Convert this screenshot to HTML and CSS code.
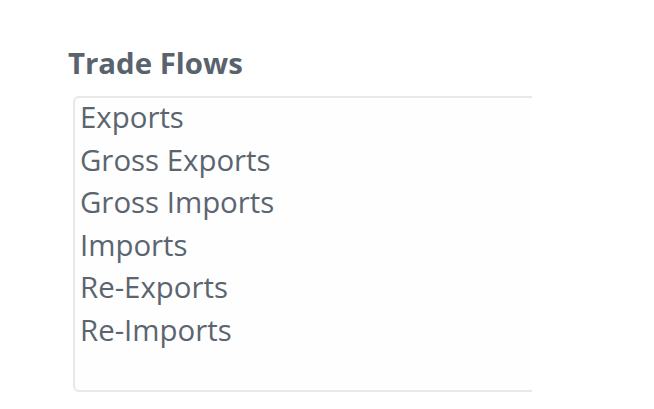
FILE: index.html
```html
<!DOCTYPE html>
<html>
<head>
<meta charset="utf-8">
<link rel="stylesheet" href="styles.css">
</head>
<body>
<div class="field">
  <div class="label">Trade Flows</div>
  <div class="clip">
    <div class="listbox">
      <div class="opt">Exports</div>
      <div class="opt">Gross Exports</div>
      <div class="opt">Gross Imports</div>
      <div class="opt">Imports</div>
      <div class="opt">Re-Exports</div>
      <div class="opt">Re-Imports</div>
    </div>
  </div>
</div>
</body>
</html>
```
FILE: styles.css
```css
html, body {
  margin: 0;
  padding: 0;
  background: #ffffff;
}
body {
  font-family: "Open Sans", "Liberation Sans", sans-serif;
  width: 654px;
  height: 409px;
  overflow: hidden;
}
.field {
  padding: 43px 0 0 68px;
}
.label {
  font-weight: 700;
  font-size: 29.4px;
  line-height: 40px;
  color: #59636d;
  margin-bottom: 13px;
}
.clip {
  margin-left: 5px;
  width: 459px;
  overflow: hidden;
}
.listbox {
  width: 600px;
  height: 296px;
  border: 2px solid #e8e8e8;
  border-radius: 6px;
  background: #fefefe;
  padding: 0 5px;
  box-sizing: border-box;
}
.opt {
  font-size: 29.4px;
  line-height: 42.6px;
  color: #5b6570;
}
.opt:first-child {
  margin-top: -2px;
}
```
